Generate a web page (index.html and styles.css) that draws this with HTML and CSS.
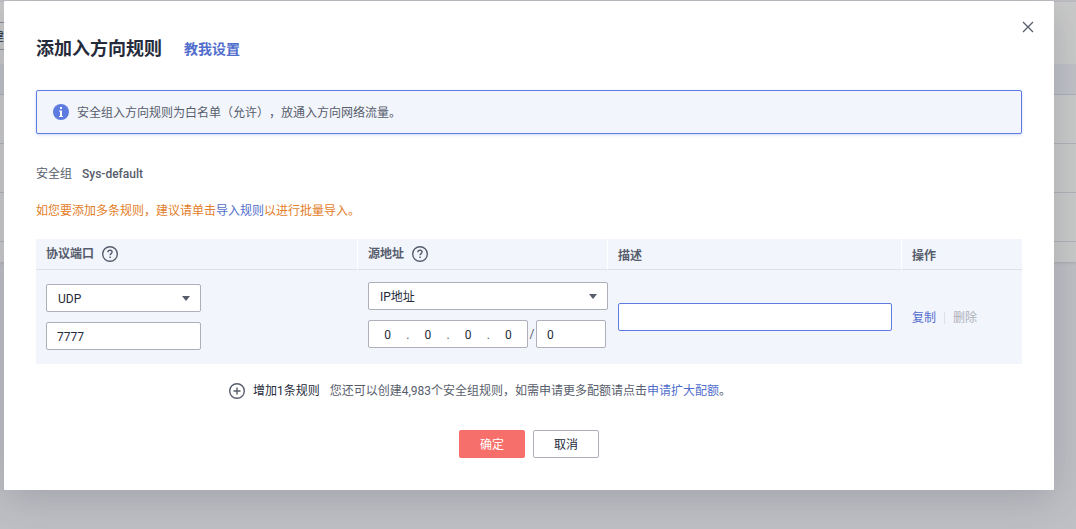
FILE: index.html
```html
<!DOCTYPE html>
<html lang="zh-CN">
<head>
<meta charset="utf-8">
<meta name="viewport" content="width=device-width, initial-scale=1">
<title>添加入方向规则</title>
<link rel="stylesheet" href="styles.css">
</head>
<body>
<div class="backdrop" aria-hidden="true">
  <div class="panel">
    <div class="panel-tools"><span class="panel-button">建</span></div>
    <div class="panel-head"></div>
    <div class="panel-row"></div>
    <div class="panel-row"></div>
    <div class="panel-row"></div>
    <div class="panel-foot"></div>
  </div>
</div>

<main class="dialog" role="dialog" aria-labelledby="dialog-title">
  <header class="dialog-header">
    <h1 class="dialog-title" id="dialog-title">添加入方向规则</h1>
    <a class="help-link" href="#">教我设置</a>
    <button class="close" type="button" aria-label="关闭">
      <svg width="12" height="12" viewBox="0 0 12 12"><path d="M1 1l10 10M11 1L1 11" fill="none" stroke="#575d6c" stroke-width="1.3"/></svg>
    </button>
  </header>

  <div class="notice">
    <svg width="16" height="16" viewBox="0 0 16 16"><circle cx="8" cy="8" r="8" fill="#5e7ce0"/><path d="M7 3h2v2H7zM6 6.500h3V12H7V7.500H6zM6 12h4v1H6z" fill="#fff"/></svg>
    <span class="notice-text">安全组入方向规则为白名单（允许），放通入方向网络流量。</span>
  </div>

  <div class="group"><span>安全组</span><strong class="group-name">Sys-default</strong></div>
  <p class="tip">如您要添加多条规则，建议请单击<a href="#">导入规则</a>以进行批量导入。</p>

  <table class="rules">
    <colgroup><col class="col-port"><col class="col-source"><col><col class="col-action"></colgroup>
    <thead>
      <tr>
        <th scope="col"><span class="th-label">协议端口
          <svg width="16" height="16" viewBox="0 0 16 16" fill="none" stroke="#575d6c"><circle cx="8" cy="8" r="7.300" stroke-width="1.400"/><path d="M5.900 6.300c0-1.300.9-2.100 2.100-2.100s2.100.8 2.100 1.900c0 1.500-2 1.600-2 3.200" stroke-width="1.400"/><path d="M8.100 10.500v1.400" stroke-width="1.500"/></svg></span></th>
        <th scope="col"><span class="th-label">源地址
          <svg width="16" height="16" viewBox="0 0 16 16" fill="none" stroke="#575d6c"><circle cx="8" cy="8" r="7.300" stroke-width="1.400"/><path d="M5.900 6.300c0-1.300.9-2.100 2.100-2.100s2.100.8 2.100 1.900c0 1.500-2 1.600-2 3.200" stroke-width="1.400"/><path d="M8.100 10.500v1.400" stroke-width="1.500"/></svg></span></th>
        <th class="th-text" scope="col">描述</th>
        <th class="th-text" scope="col">操作</th>
      </tr>
    </thead>
    <tbody>
      <tr>
        <td>
          <div class="stack stack-port">
            <div class="select"><select aria-label="协议"><option>UDP</option></select><svg width="8" height="5" viewBox="0 0 8 5"><path d="M0 0h8L4 5z" fill="#575d6c"/></svg></div>
            <input class="field" type="text" value="7777" aria-label="端口">
          </div>
        </td>
        <td class="cell-source">
          <div class="stack stack-source">
            <div class="select"><select aria-label="源地址类型"><option>IP地址</option></select><svg width="8" height="5" viewBox="0 0 8 5"><path d="M0 0h8L4 5z" fill="#575d6c"/></svg></div>
            <div class="address">
              <div class="field ip">
                <input type="text" value="0" aria-label="第一段"><span>.</span><input type="text" value="0" aria-label="第二段"><span>.</span><input type="text" value="0" aria-label="第三段"><span>.</span><input type="text" value="0" aria-label="第四段">
              </div>
              <span class="slash">/</span>
              <input class="field mask" type="text" value="0" aria-label="掩码">
            </div>
          </div>
        </td>
        <td><input class="field description" type="text" aria-label="描述"></td>
        <td><div class="actions"><a href="#">复制</a><button class="delete" type="button" disabled>删除</button></div></td>
      </tr>
    </tbody>
  </table>

  <div class="add">
    <button class="add-button" type="button">
      <svg width="16" height="16" viewBox="0 0 16 16" fill="none" stroke="#575d6c" stroke-width="1.400"><circle cx="8" cy="8" r="7.300"/><path d="M4.500 8h7M8 4.500v7"/></svg>
      增加1条规则
    </button>
    <span>您还可以创建4,983个安全组规则，如需申请更多配额请点击<a href="#">申请扩大配额</a>。</span>
  </div>

  <footer class="buttons">
    <button class="button primary" type="button">确定</button>
    <button class="button" type="button">取消</button>
  </footer>
</main>
</body>
</html>
```
FILE: styles.css
```css
* {
  box-sizing: border-box;
}

body {
  margin: 0;
  min-height: 100vh;
  padding: 1px 22px 0 4px;
  background: #bfc0c5;
  color: #575d6c;
  font: 12px/18px Roboto, "Noto Sans CJK SC", sans-serif;
  text-spacing-trim: space-all;
}

button,
input,
select {
  font: inherit;
  color: #252b3a;
}

button {
  padding: 0;
  border: 0;
  background: none;
}

a {
  color: #526ecc;
  text-decoration: none;
}

svg {
  display: block;
  flex: none;
}

/* Dimmed page behind the dialog */
.backdrop {
  position: absolute;
  inset: 0;
  overflow: hidden;
}

.panel {
  margin-top: 2px;
  background: #cacaca;
  box-shadow: 0 1px 3px #a9aaae;
}

.panel-tools {
  height: 62px;
  padding-top: 20px;
}

.panel-button {
  display: block;
  width: 60px;
  height: 28px;
  border: 1px solid #8a8e99;
  border-left: 0;
  color: #252b3a;
  line-height: 28px;
  text-indent: -8px;
}

.panel-head {
  height: 31px;
  background: #c1c2c8;
  border-bottom: 1px solid #adb0b8;
}

.panel-row {
  height: 49px;
  border-bottom: 1px solid #b0b2b9;
}

.panel-foot {
  height: 20px;
}

.dialog {
  position: relative;
  padding: 32px;
  background: #fff;
  border-radius: 1px;
  box-shadow: 0 8px 40px rgba(37, 43, 58, 0.2);
}

.dialog-header {
  display: flex;
  align-items: center;
  gap: 22px;
  height: 32px;
}

.dialog-title {
  margin: 0;
  color: #252b3a;
  font-size: 18px;
  font-weight: 700;
}

.help-link {
  font-size: 14px;
  font-weight: 700;
}

.close {
  position: absolute;
  top: 20px;
  right: 20px;
}

.notice {
  display: flex;
  align-items: center;
  gap: 8px;
  height: 44px;
  margin-top: 25px;
  padding: 0 16px;
  background: #f2f5fc;
  border: 1px solid #5e7ce0;
  border-radius: 2px;
  box-shadow: 0 1px 3px rgba(94, 124, 224, 0.3);
}

.notice-text {
  padding-top: 2px;
}

.group {
  display: flex;
  gap: 10px;
  margin-top: 31px;
}

.group-name {
  font-weight: 500;
}

.tip {
  margin: 19px 0;
  color: #e37d29;
}

.rules {
  width: 100%;
  border-collapse: separate;
  border-spacing: 0;
  table-layout: fixed;
  background: #f2f5fc;
}

.col-port {
  width: 322px;
}

.col-source {
  width: 250px;
}

.col-action {
  width: 120px;
}

.rules th {
  height: 31px;
  padding: 0 10px;
  border-right: 1px solid #fff;
  border-bottom: 1px solid #dfe1e6;
  font-weight: 700;
  text-align: left;
}

.rules th:last-child {
  border-right: 0;
}

.rules .th-text {
  padding-top: 4px;
}

.th-label {
  display: flex;
  align-items: center;
  gap: 8px;
}

.rules td {
  height: 94px;
  padding: 0 10px;
}

.rules .cell-source {
  padding: 0 0 4px 10px;
}

.stack {
  display: flex;
  flex-direction: column;
  gap: 10px;
}

.stack-port {
  width: 155px;
}

.stack-source {
  width: 240px;
}

.select {
  display: grid;
  align-items: center;
}

.select > * {
  grid-area: 1 / 1;
}

.select svg {
  justify-self: end;
  margin-right: 11px;
  pointer-events: none;
}

.select select,
.field {
  width: 100%;
  height: 28px;
  padding: 2px 10px 0;
  background: #fff;
  border: 1px solid #adb0b8;
  border-radius: 2px;
  appearance: none;
}

.select select {
  padding-left: 11px;
}

.address {
  display: flex;
  align-items: center;
}

.field.ip {
  display: flex;
  align-items: center;
  width: 160px;
  padding: 2px 0 0;
}

.ip input {
  flex: 1;
  min-width: 0;
  padding: 0;
  border: 0;
  background: none;
  text-align: center;
}

.slash {
  width: 8px;
  text-align: center;
}

.field.mask {
  width: 70px;
}

.field.description {
  display: block;
  border-color: #5e7ce0;
}

.actions {
  display: flex;
  align-items: center;
  padding-top: 2px;
}

.delete {
  height: 12px;
  margin-left: 8px;
  padding-left: 8px;
  border-left: 1px solid #dfe1e6;
  color: #adb0b8;
  line-height: 12px;
}

.add {
  display: flex;
  align-items: center;
  justify-content: center;
  gap: 10px;
  margin-top: 18px;
  padding-right: 98px;
}

.add-button {
  display: flex;
  align-items: center;
  gap: 8px;
}

.buttons {
  display: flex;
  justify-content: center;
  gap: 8px;
  margin-top: 30px;
}

.button {
  width: 66px;
  height: 28px;
  padding-top: 2px;
  border: 1px solid #adb0b8;
  border-radius: 2px;
  background: #fff;
}

.button.primary {
  border-color: #f66f6a;
  background: #f66f6a;
  color: #fff;
}
```
